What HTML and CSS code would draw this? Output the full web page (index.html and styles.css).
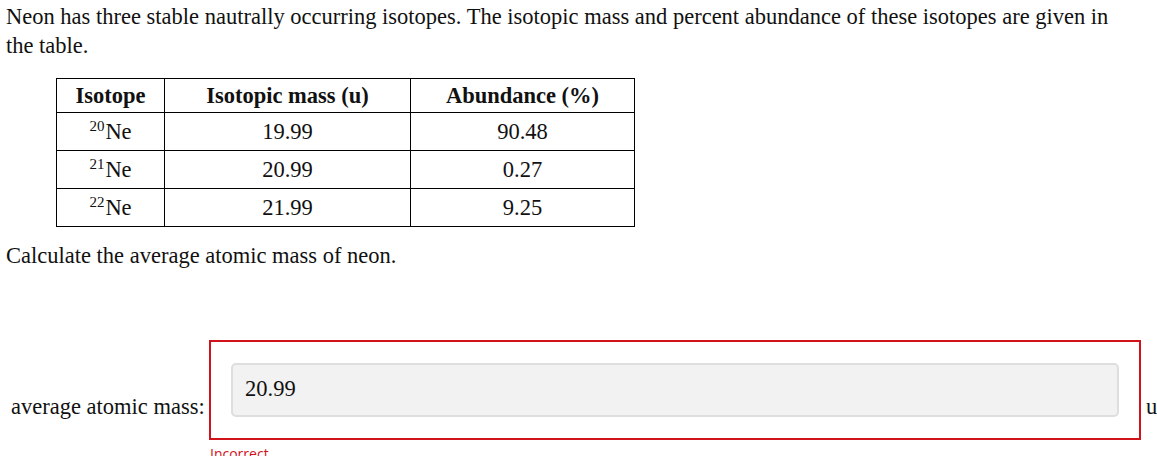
FILE: index.html
```html
<!DOCTYPE html>
<html>
<head>
<meta charset="utf-8">
<link rel="stylesheet" href="styles.css">
</head>
<body>
<div class="page">
  <p class="intro">Neon has three stable nautrally occurring isotopes. The isotopic mass and percent abundance of these isotopes are given in the table.</p>
  <table class="iso">
    <thead>
      <tr><th class="c1">Isotope</th><th class="c2">Isotopic mass (u)</th><th class="c3">Abundance (%)</th></tr>
    </thead>
    <tbody>
      <tr><td><sup>20</sup>Ne</td><td>19.99</td><td>90.48</td></tr>
      <tr><td><sup>21</sup>Ne</td><td>20.99</td><td>0.27</td></tr>
      <tr><td><sup>22</sup>Ne</td><td>21.99</td><td>9.25</td></tr>
    </tbody>
  </table>
  <p class="question">Calculate the average atomic mass of neon.</p>
  <div class="answer">
    <label class="label">average atomic mass:</label>
    <div class="field">
      <div class="box">
        <div class="input">20.99</div>
      </div>
      <div class="feedback">Incorrect</div>
    </div>
    <span class="unit">u</span>
  </div>
</div>
</body>
</html>
```

FILE: styles.css
```css
html, body {
  margin: 0;
  padding: 0;
  background: #fff;
}
body {
  font-family: "Liberation Serif", "Times New Roman", serif;
  font-size: 22.5px;
  color: #111;
  overflow: hidden;
}
.page {
  padding: 3px 0 0 6px;
}
.intro {
  margin: 0;
  line-height: 28.5px;
  width: 1115px;
}
.iso {
  border-collapse: collapse;
  margin: 18px 0 0 50px;
  text-align: center;
}
.iso th, .iso td {
  border: 1px solid #000;
  line-height: 24px;
  padding: 0 8px;
}
.iso th {
  height: 33px;
  font-weight: bold;
}
.iso td {
  height: 37px;
}
.iso .c1 { width: 91px; }
.iso .c2 { width: 229px; }
.iso .c3 { width: 207px; }
.iso sup {
  font-size: 15px;
  line-height: 0;
  vertical-align: 8px;
  margin-right: 1px;
}
.question {
  margin: 15px 0 0 0;
  line-height: 28px;
}
.answer {
  display: flex;
  align-items: flex-start;
  margin-top: 70px;
}
.label {
  flex: 0 0 auto;
  width: 198px;
  padding-left: 5px;
  margin-top: 53px;
  line-height: 28px;
}
.field {
  flex: 0 0 auto;
  display: flex;
  flex-direction: column;
}
.box {
  width: 888px;
  border: 2px solid #d0121b;
  padding: 21px 20px 21px;
}
.input {
  box-sizing: border-box;
  height: 54px;
  border: 2px solid #dedede;
  border-radius: 5px;
  background: #f2f2f2;
  padding: 0 12px;
  line-height: 48px;
  color: #111;
}
.feedback {
  font-family: "Open Sans", "Noto Sans", sans-serif;
  font-size: 14px;
  color: #d0121b;
  margin-top: 5px;
  padding-left: 1px;
  line-height: 18px;
}
.unit {
  flex: 0 0 auto;
  margin-left: 5px;
  margin-top: 53px;
  line-height: 28px;
}
```
